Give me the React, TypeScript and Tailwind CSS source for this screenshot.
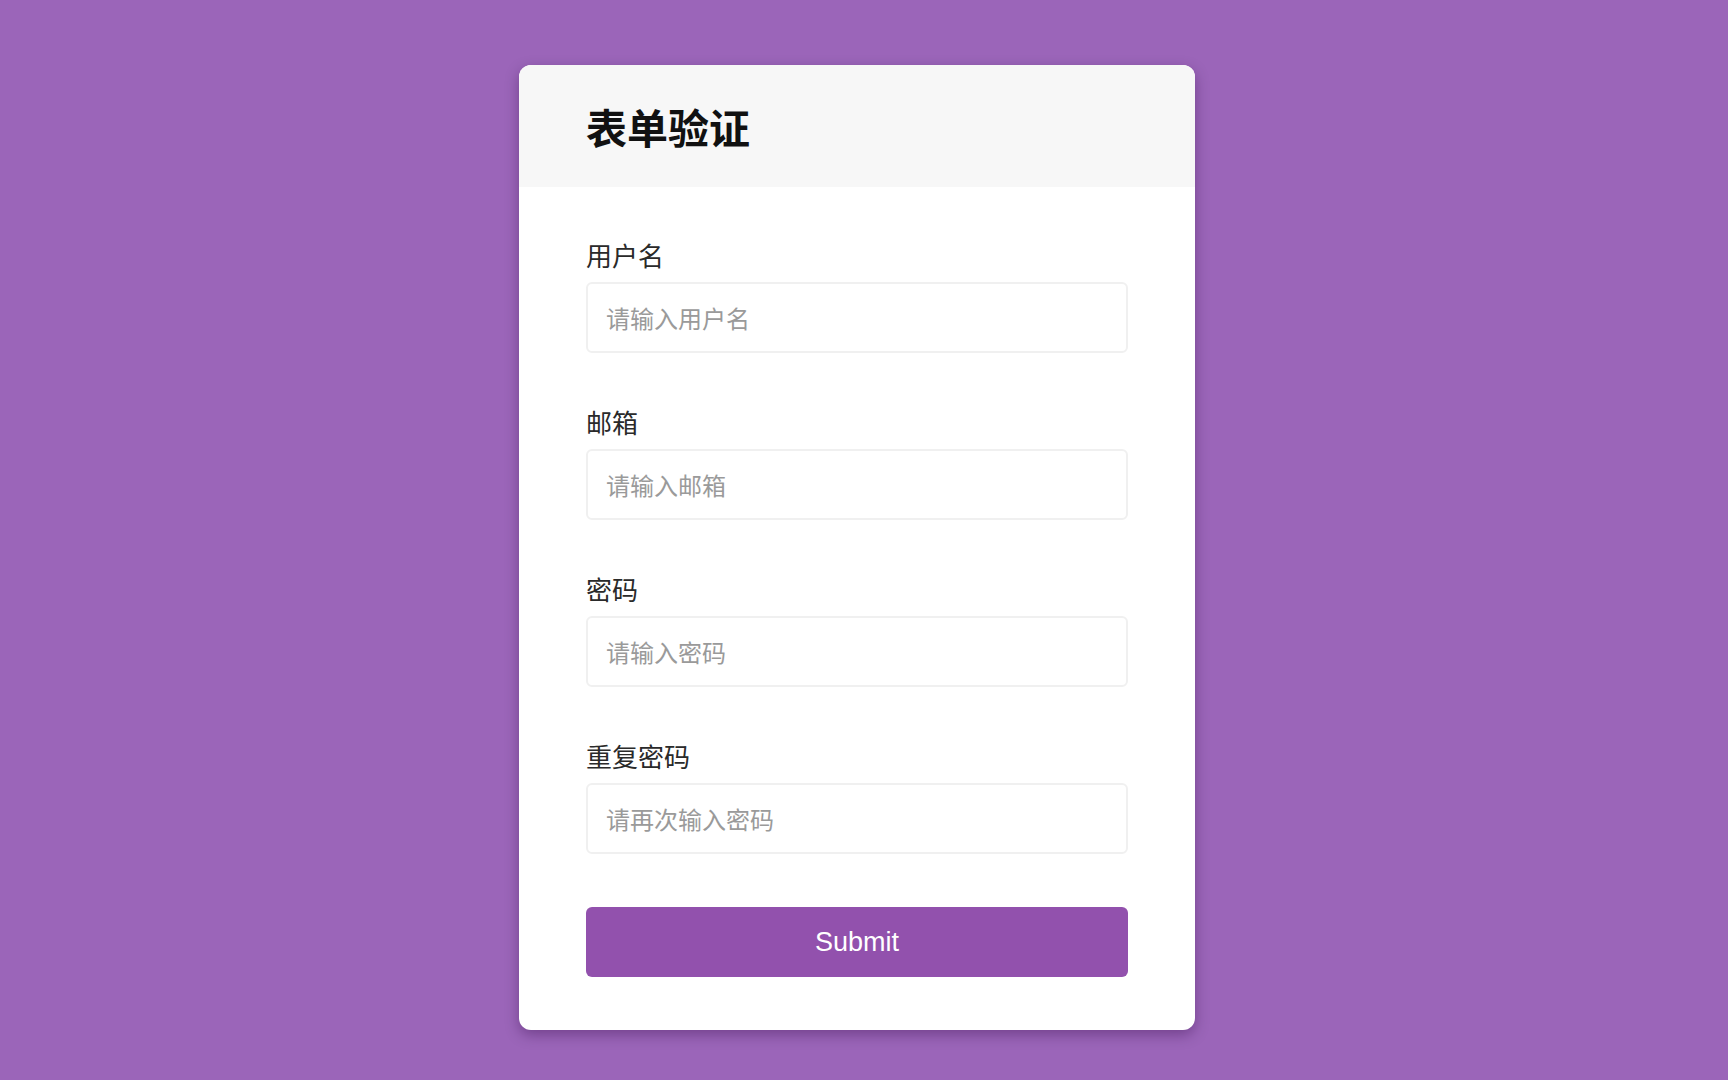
import { useState } from "react";

const fields = [
  { name: "username", label: "用户名", type: "text", placeholder: "请输入用户名" },
  { name: "email", label: "邮箱", type: "email", placeholder: "请输入邮箱" },
  { name: "password", label: "密码", type: "password", placeholder: "请输入密码" },
  { name: "confirm", label: "重复密码", type: "password", placeholder: "请再次输入密码" },
];

export default function App() {
  const [values, setValues] = useState<Record<string, string>>({});

  return (
    <div className="min-h-screen bg-[#9b65b9] flex justify-center pt-[65px] pr-[14px] font-['Microsoft_YaHei','Noto_Sans_CJK_SC',sans-serif]">
      <div className="w-[676px] h-fit bg-white rounded-[12px] overflow-hidden shadow-[0_5px_14px_rgba(40,0,60,0.35)]">
        {/* Header */}
        <div className="h-[122px] bg-[#f7f7f7] flex items-center px-[67px]">
          <h1 className="text-[41px] font-bold text-[#111] leading-none">表单验证</h1>
        </div>

        {/* Form body */}
        <form
          className="px-[67px] pt-[50px] pb-[53px] flex flex-col"
          onSubmit={(e) => e.preventDefault()}
        >
          <div className="flex flex-col gap-[51px]">
            {fields.map((f) => (
              <div key={f.name} className="flex flex-col gap-[9px]">
                <label htmlFor={f.name} className="text-[26px] leading-[36px] text-[#2a2a2a]">
                  {f.label}
                </label>
                <input
                  id={f.name}
                  type={f.type}
                  placeholder={f.placeholder}
                  value={values[f.name] ?? ""}
                  onChange={(e) => setValues({ ...values, [f.name]: e.target.value })}
                  className="h-[71px] w-full rounded-[6px] border-2 border-[#f0f0f0] px-[18px] text-[24px] text-[#333] placeholder:text-[#9a9a9a] outline-none"
                />
              </div>
            ))}
          </div>

          <button
            type="submit"
            className="mt-[53px] h-[70px] w-full rounded-[6px] bg-[#9251ad] text-white text-[27px] font-['Liberation_Sans',Arial,sans-serif]"
          >
            Submit
          </button>
        </form>
      </div>
    </div>
  );
}
